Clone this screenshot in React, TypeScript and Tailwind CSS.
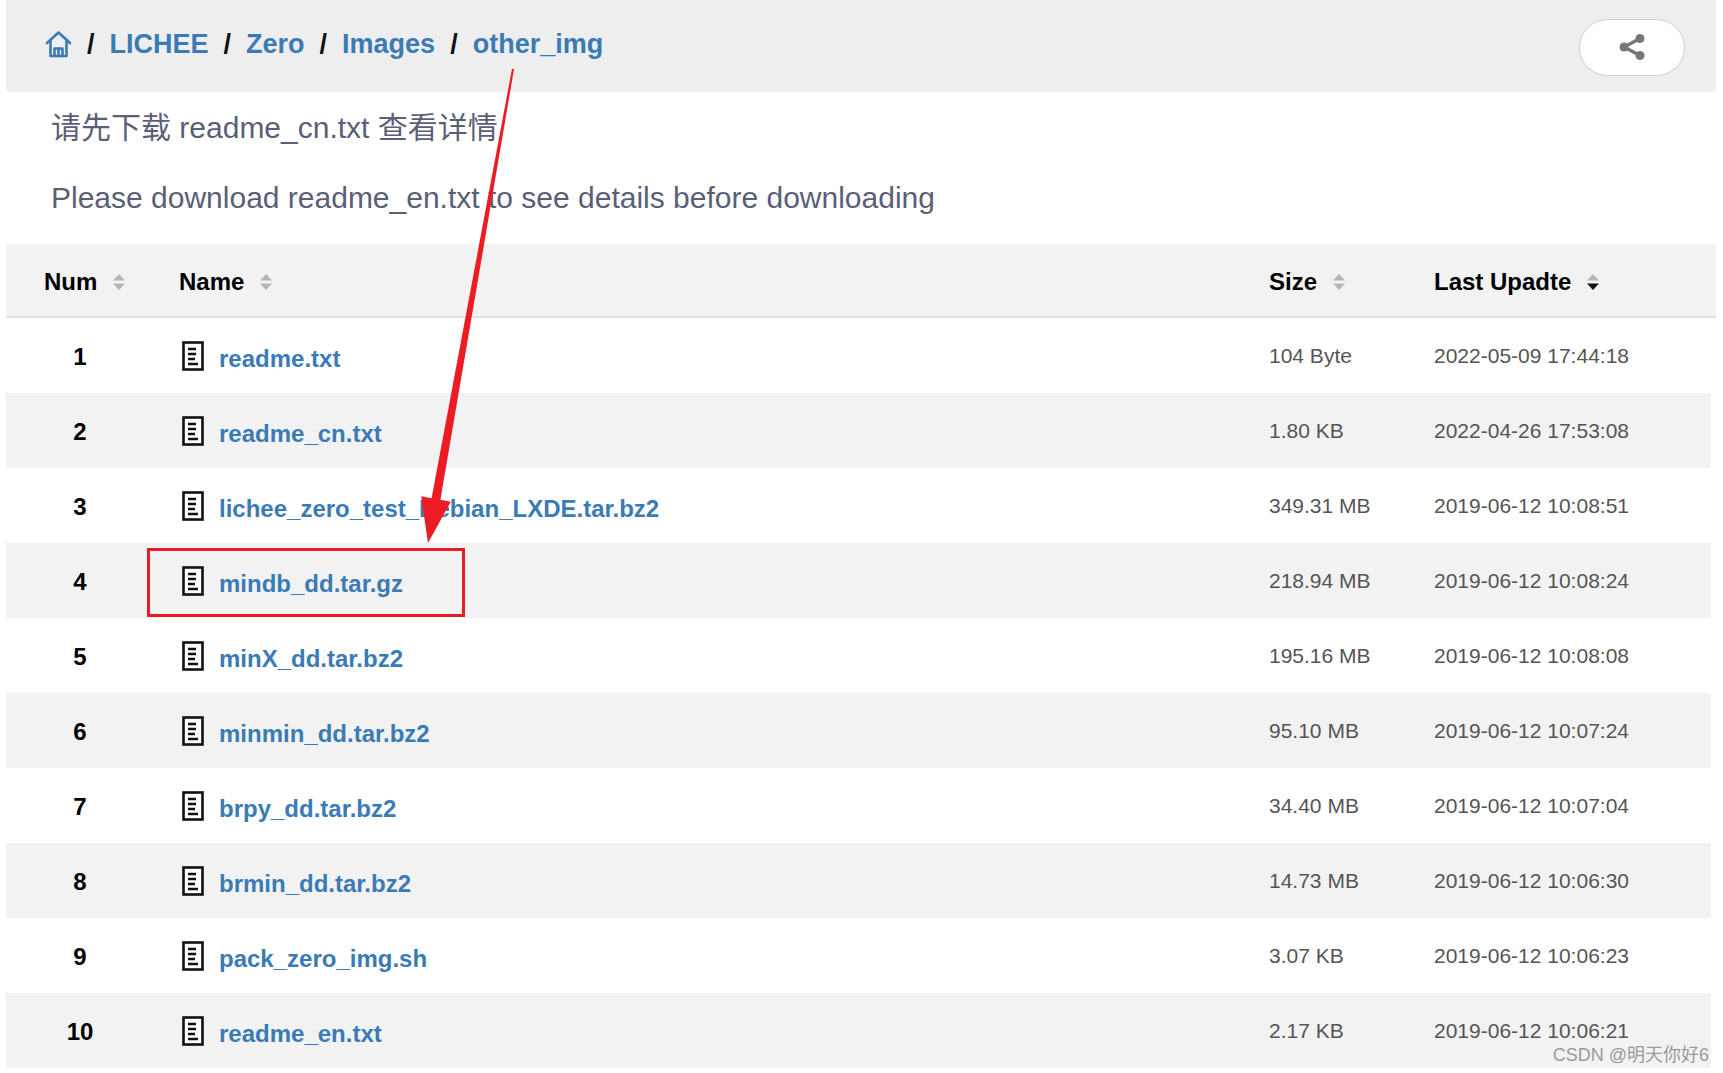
import React from "react";

// Listing d'un dossier de téléchargement (LICHEE / Zero / Images / other_img)
// avec l'annotation rouge posée sur la capture.

type Row = { name: string; size: string; date: string };

const ROWS: Row[] = [
  { name: "readme.txt", size: "104 Byte", date: "2022-05-09 17:44:18" },
  { name: "readme_cn.txt", size: "1.80 KB", date: "2022-04-26 17:53:08" },
  { name: "lichee_zero_test_Debian_LXDE.tar.bz2", size: "349.31 MB", date: "2019-06-12 10:08:51" },
  { name: "mindb_dd.tar.gz", size: "218.94 MB", date: "2019-06-12 10:08:24" },
  { name: "minX_dd.tar.bz2", size: "195.16 MB", date: "2019-06-12 10:08:08" },
  { name: "minmin_dd.tar.bz2", size: "95.10 MB", date: "2019-06-12 10:07:24" },
  { name: "brpy_dd.tar.bz2", size: "34.40 MB", date: "2019-06-12 10:07:04" },
  { name: "brmin_dd.tar.bz2", size: "14.73 MB", date: "2019-06-12 10:06:30" },
  { name: "pack_zero_img.sh", size: "3.07 KB", date: "2019-06-12 10:06:23" },
  { name: "readme_en.txt", size: "2.17 KB", date: "2019-06-12 10:06:21" },
];

const CRUMBS = ["LICHEE", "Zero", "Images", "other_img"];

function HomeIcon() {
  return (
    <svg width="27" height="28" viewBox="0 0 27 28" fill="none" stroke="#3a7bb5" strokeWidth="2.6" strokeLinejoin="round" strokeLinecap="round">
      <path d="M2 13 L13.5 2.5 L25 13" />
      <path d="M5.5 11 V26 H21.5 V11" />
      <path d="M9.5 26 V18.5 H17.5 V26 M13.5 18.5 V26" />
    </svg>
  );
}

function ShareIcon() {
  return (
    <svg width="28" height="28" viewBox="0 0 28 28" fill="#777">
      <circle cx="22" cy="5.5" r="4.5" />
      <circle cx="6" cy="14" r="4.5" />
      <circle cx="22" cy="22.5" r="4.5" />
      <path d="M6 14 L22 5.5 M6 14 L22 22.5" stroke="#777" strokeWidth="3.2" />
    </svg>
  );
}

function FileIcon() {
  return (
    <svg width="22" height="30" viewBox="0 0 22 30" className="shrink-0">
      <rect x="1.5" y="1.5" width="19" height="27" fill="#fff" stroke="#111" strokeWidth="2.6" />
      <path d="M6 8 H14 M6 13 H14 M6 18 H13 M6 23 H16" stroke="#111" strokeWidth="2.4" />
    </svg>
  );
}

function SortIcon({ active }: { active?: boolean }) {
  return (
    <svg width="16" height="18" viewBox="0 0 16 18" className="shrink-0">
      <path d="M8 1 L14 7.5 H2 Z" fill="#b5b5b5" />
      <path d="M8 17 L14 10.5 H2 Z" fill={active ? "#111" : "#b5b5b5"} />
    </svg>
  );
}

function HeadCell({ label, active }: { label: string; active?: boolean }) {
  return (
    <span className="flex items-center gap-[14px]">
      <span>{label}</span>
      <SortIcon active={active} />
    </span>
  );
}

export default function App() {
  return (
    <div className="relative w-full min-h-[1073px] bg-white overflow-hidden" style={{ fontFamily: '"Liberation Sans", Arial, "Noto Sans CJK SC", sans-serif' }}>
      <div className="pl-[6px] pr-[7px]">
        <header className="h-[92px] bg-[#eeeeee] rounded-b-[4px] flex items-center justify-between pl-[39px] pr-[31px]">
          <nav className="flex items-center gap-[15px] text-[27px] font-bold mb-[4px]">
            <HomeIcon />
            {CRUMBS.map((c) => (
              <React.Fragment key={c}>
                <span className="text-[#111]">/</span>
                <a className="text-[#3a7bb5]">{c}</a>
              </React.Fragment>
            ))}
          </nav>
          <button className="w-[106px] h-[57px] rounded-full bg-white border border-[#cfcfcf] flex items-center justify-center mt-[2px]">
            <ShareIcon />
          </button>
        </header>

        <div className="pl-[45px] text-[30px] text-[#5a5f78]">
          <p className="h-[72px] pt-[16px] leading-[40px]">请先下载 readme_cn.txt 查看详情</p>
          <p className="h-[80px] pt-[14px] leading-[40px]">Please download readme_en.txt to see details before downloading</p>
        </div>

        <div>
          <div className="h-[74px] pt-[3px] bg-[#f2f2f2] border-b-2 border-[#e2e2e2] flex items-center text-[24px] font-bold text-black">
            <div className="w-[148px] pl-[38px]"><HeadCell label="Num" /></div>
            <div className="w-[1099px] pl-[25px]"><HeadCell label="Name" /></div>
            <div className="w-[165px] pl-[16px]"><HeadCell label="Size" /></div>
            <div className="flex-1 pl-[16px]"><HeadCell label="Last Upadte" active /></div>
          </div>
          {ROWS.map((r, i) => (
            <div key={r.name} className={`h-[75px] mr-[5px] flex items-center ${i % 2 === 1 ? "bg-[#f2f2f2]" : "bg-white"}`}>
              <div className="w-[148px] text-center text-[24px] font-bold text-black mt-[2px]">{i + 1}</div>
              <div className="w-[1099px] pl-[28px] flex items-center gap-[15px]">
                <FileIcon />
                <a className="text-[24px] font-bold text-[#3a7bb5] mt-[6px]">{r.name}</a>
              </div>
              <div className="w-[165px] pl-[16px] text-[21px] text-[#555]">{r.size}</div>
              <div className="flex-1 pl-[16px] text-[21px] text-[#555]">{r.date}</div>
            </div>
          ))}
        </div>
      </div>

      {/* annotation rouge par-dessus la capture */}
      <div className="absolute left-[147px] top-[548px] w-[318px] h-[69px] border-[3px] border-[#e81c24]" />
      <svg className="absolute left-0 top-0 pointer-events-none" width="1723" height="1073">
        <polygon points="512,68.8 514,69.2 440.4,499.8 450.8,501.7 428,543 421.2,496.3 431.6,498.2" fill="#ed1c24" />
      </svg>

      <div className="absolute right-[14px] top-[1042px] text-[18px] text-[#9a9a9a]" style={{ fontFamily: '"Liberation Sans", "Noto Sans CJK SC", sans-serif' }}>
        CSDN @明天你好6
      </div>
    </div>
  );
}
